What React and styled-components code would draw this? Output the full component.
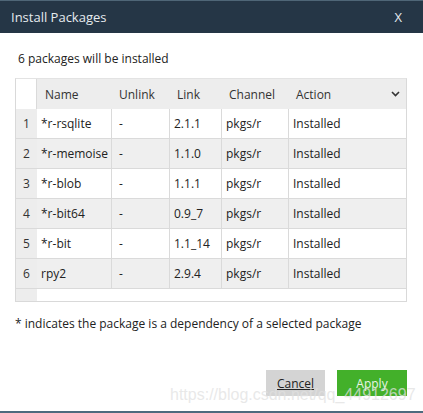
import React from 'react'
import styled, { createGlobalStyle } from 'styled-components'

const Global = createGlobalStyle`
  html, body { margin: 0; padding: 0; background: #fff; }
  body { font-family: "Open Sans", "Noto Sans", sans-serif; color: #222; }
`

const packages = [
  { name: '*r-rsqlite', unlink: '-', link: '2.1.1', channel: 'pkgs/r', action: 'Installed' },
  { name: '*r-memoise', unlink: '-', link: '1.1.0', channel: 'pkgs/r', action: 'Installed' },
  { name: '*r-blob', unlink: '-', link: '1.1.1', channel: 'pkgs/r', action: 'Installed' },
  { name: '*r-bit64', unlink: '-', link: '0.9_7', channel: 'pkgs/r', action: 'Installed' },
  { name: '*r-bit', unlink: '-', link: '1.1_14', channel: 'pkgs/r', action: 'Installed' },
  { name: 'rpy2', unlink: '-', link: '2.9.4', channel: 'pkgs/r', action: 'Installed' },
]

const cols = '21px 74px 58px 52px 67px 1fr'

const Dialog = styled.div`
  position: relative;
  width: 423px;
  height: 413px;
  box-sizing: border-box;
  border-bottom: 2px solid #4d6a7e;
  display: flex;
  flex-direction: column;
`

const TitleBar = styled.div`
  height: 33px;
  box-sizing: border-box;
  background: #253646;
  border-top: 1px solid #4f6677;
  display: flex;
  align-items: center;
  justify-content: space-between;
  padding: 0 21px 0 11px;
  color: #e6ebef;
  font-size: 13px;
`

const Body = styled.div`
  flex: 1;
  display: flex;
  flex-direction: column;
  padding: 18px 16px 0 15px;
`

const Summary = styled.div`
  font-size: 12px;
  padding-left: 3px;
  line-height: 16px;
  margin-bottom: 11px;
`

const Table = styled.div`
  width: 392px;
  box-sizing: border-box;
  border: 1px solid #d9d9d9;
  border-top: 1px solid #e3e3e3;
  font-size: 12px;
`

const Row = styled.div`
  display: grid;
  grid-template-columns: ${cols};
  height: 30px;
  background: ${p => (p.$alt ? '#efefef' : '#fff')};
  border-bottom: ${p => (p.$head ? 'none' : '1px solid #dadada')};
  box-sizing: border-box;
`

const HeadRow = styled(Row)`
  background: #ededed;
  position: relative;
`

const HeadCell = styled.div`
  display: flex;
  align-items: center;
  padding-left: 8px;
  color: #333;
`

const Corner = styled.div`
  background: #fff;
  border-right: 1px solid #dadada;
`

const NumCell = styled.div`
  background: #ededed;
  display: flex;
  align-items: center;
  justify-content: center;
  color: #333;
`

const Cell = styled.div`
  display: flex;
  align-items: center;
  padding-left: ${p => p.$pad || 4}px;
  border-left: ${p => (p.$first ? 'none' : '1px solid #dadada')};
  white-space: nowrap;
  overflow: hidden;
  color: #222;
`

const Filler = styled.div`
  display: grid;
  grid-template-columns: ${cols};
  height: 12px;
`

const Chevron = styled.svg`
  position: absolute;
  right: 6px;
  top: 12px;
`

const Note = styled.div`
  font-size: 12px;
  margin-top: 14px;
  line-height: 16px;
`

const Buttons = styled.div`
  margin-top: auto;
  margin-bottom: 15px;
  display: flex;
  justify-content: flex-end;
  gap: 12px;
`

const Button = styled.button`
  height: 26px;
  width: ${p => p.$w}px;
  border: none;
  font-family: inherit;
  font-size: 12px;
  padding: 0;
  background: ${p => (p.$primary ? '#43b02a' : '#d4d4d4')};
  color: ${p => (p.$primary ? '#e8f5e4' : '#222')};
  text-decoration: ${p => (p.$primary ? 'none' : 'underline')};
`

const Watermark = styled.div`
  position: absolute;
  left: 170px;
  top: 386px;
  font-family: "Liberation Sans", Arial, sans-serif;
  font-size: 16px;
  color: rgba(225, 225, 225, 0.75);
  pointer-events: none;
`

export default function App() {
  return (
    <>
      <Global />
      <Dialog>
        <TitleBar>
          <span>Install Packages</span>
          <span>X</span>
        </TitleBar>
        <Body>
          <Summary>6 packages will be installed</Summary>
          <Table>
            <HeadRow $head>
              <Corner />
              <HeadCell>Name</HeadCell>
              <HeadCell>Unlink</HeadCell>
              <HeadCell>Link</HeadCell>
              <HeadCell>Channel</HeadCell>
              <HeadCell>Action</HeadCell>
              <Chevron width="9" height="6" viewBox="0 0 9 6">
                <path d="M1 1 L4.5 4.5 L8 1" fill="none" stroke="#333" strokeWidth="1.6" />
              </Chevron>
            </HeadRow>
            {packages.map((p, i) => (
              <Row key={p.name} $alt={i % 2 === 1}>
                <NumCell>{i + 1}</NumCell>
                <Cell $first>{p.name}</Cell>
                <Cell $pad={7}>{p.unlink}</Cell>
                <Cell>{p.link}</Cell>
                <Cell>{p.channel}</Cell>
                <Cell>{p.action}</Cell>
              </Row>
            ))}
            <Filler>
              <NumCell />
            </Filler>
          </Table>
          <Note>* indicates the package is a dependency of a selected package</Note>
          <Buttons>
            <Button $w={59}>Cancel</Button>
            <Button $primary $w={70}>Apply</Button>
          </Buttons>
        </Body>
        <Watermark>https://blog.csdn.net/qq_44912697</Watermark>
      </Dialog>
    </>
  )
}
